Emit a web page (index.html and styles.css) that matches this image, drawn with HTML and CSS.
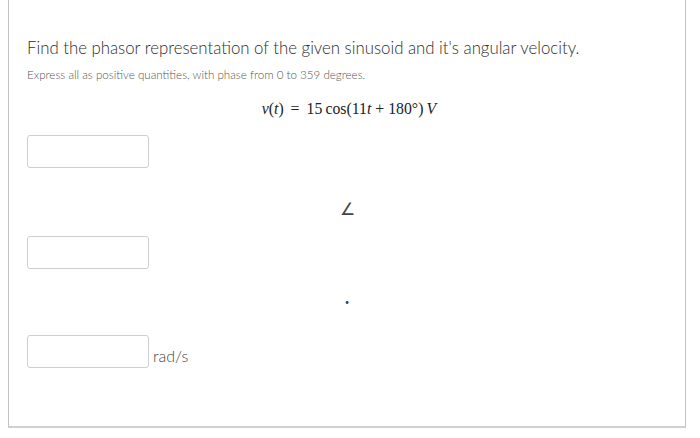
FILE: index.html
```html
<!DOCTYPE html>
<html>
<head>
<meta charset="utf-8">
<link rel="stylesheet" href="styles.css">
</head>
<body>
<div class="frame">
  <div class="question">Find the phasor representation of the given sinusoid and it's angular velocity.</div>
  <div class="note">Express all as positive quantities, with phase from 0 to 359 degrees.</div>
  <div class="equation"><i>v</i>(<i>t</i>) <span class="eq">=</span> 15&#8201;cos(11<i>t</i> + 180°)&#8201;<i>V</i></div>
  <div class="row"><span class="box"></span></div>
  <div class="sym angle">∠</div>
  <div class="row"><span class="box"></span></div>
  <div class="sym dot">•</div>
  <div class="row"><span class="box"></span><span class="unit">rad/s</span></div>
</div>
</body>
</html>
```
FILE: styles.css
```css
html, body { margin: 0; padding: 0; background: #fff; }
body { font-family: Lato, "Open Sans", sans-serif; font-weight: 300; color: #333; }
.frame {
  margin-left: 8px;
  width: 678px;
  height: 428px;
  border-left: 1px solid #c4c4c4;
  border-right: 1px solid #c4c4c4;
  border-bottom: 2px solid #d0d0d0;
  box-sizing: border-box;
  padding: 38px 0 0 18px;
  display: flex;
  flex-direction: column;
}
.question { font-size: 16.8px; line-height: 20px; color: #2d2d2d; }
.note { font-size: 11.6px; line-height: 14px; color: #555; margin-top: 10px; }
.equation {
  font-family: "Liberation Serif", "Times New Roman", serif;
  font-weight: 400;
  font-size: 15.8px; line-height: 18px; color: #222;
  text-align: center; margin-top: 18px; padding-right: 14px;
}
.equation .eq { margin: 0 3px; }
.row { display: flex; align-items: center; height: 34px; }
.equation + .row { margin-top: 16px; }
.box {
  width: 122px; height: 33px; box-sizing: border-box;
  border: 1px solid #cfcfcf; border-radius: 3px; background: #fff;
}
.unit { font-size: 16px; margin-left: 4px; color: #444; padding-top: 9px; }
.sym { height: 67px; display: flex; align-items: center; justify-content: center; padding-right: 18px; color: #444; font-weight: 400; }
.angle { font-size: 17px; padding-top: 14px; box-sizing: border-box; }
.dot { font-size: 8px; height: 65px; }
```
